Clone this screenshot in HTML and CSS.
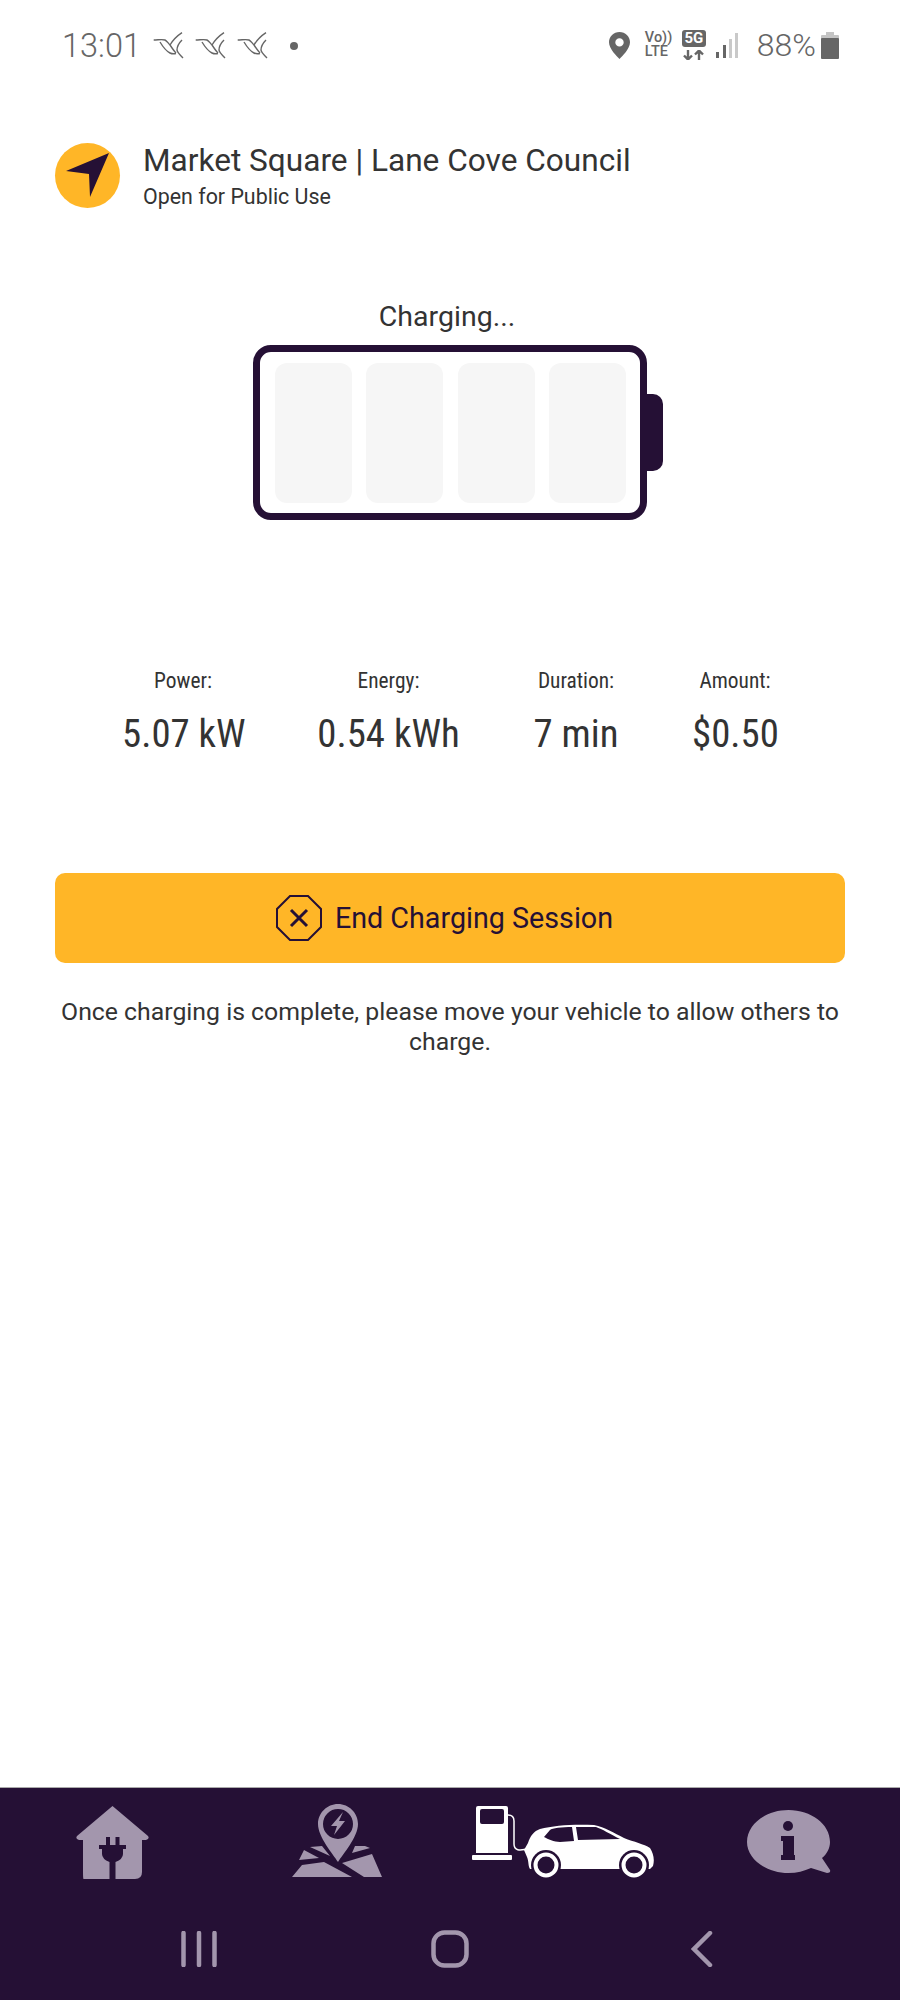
FILE: index.html
```html
<!DOCTYPE html>
<html lang="en">
<head>
  <meta charset="UTF-8">
  <meta name="viewport" content="width=device-width, initial-scale=1.0">
  <title>Charging</title>
  <link rel="stylesheet" href="styles.css">
</head>
<body>
  <div class="app">
    <div class="status-bar">
      <div class="status-left">
        <span class="time">13:01</span>
        <svg class="bird" viewBox="0 0 31 28"><path d="M.7 8C5 8 9 7 12 8 14 9 15 11 17 13 19 16 21 19 23 21M7 10C10 15 13 19 17 21 19 22 21 22 23 21.500M29 .7C24 4 20 8 17 13M30 26C27 23 24 20 24 18 24 15 26 11 29 8"/></svg>
        <svg class="bird" viewBox="0 0 31 28"><path d="M.7 8C5 8 9 7 12 8 14 9 15 11 17 13 19 16 21 19 23 21M7 10C10 15 13 19 17 21 19 22 21 22 23 21.500M29 .7C24 4 20 8 17 13M30 26C27 23 24 20 24 18 24 15 26 11 29 8"/></svg>
        <svg class="bird" viewBox="0 0 31 28"><path d="M.7 8C5 8 9 7 12 8 14 9 15 11 17 13 19 16 21 19 23 21M7 10C10 15 13 19 17 21 19 22 21 22 23 21.500M29 .7C24 4 20 8 17 13M30 26C27 23 24 20 24 18 24 15 26 11 29 8"/></svg>
        <span class="dot"></span>
      </div>
      <div class="status-right">
        <svg class="pin" viewBox="0 0 21 27"><path fill-rule="evenodd" d="M10.5 0C4.7 0 0 4.6 0 10.3 0 17 8 24.500 10.500 27 13 24.500 21 17 21 10.300 21 4.600 16.300 0 10.500 0ZM10.500 6.200A4.200 4.200 0 1 1 10.500 14.600 4.200 4.200 0 1 1 10.500 6.200Z"/></svg>
        <div class="volte"><span>Vo))</span><span>LTE</span></div>
        <div class="net">
          <span class="net-badge">5G</span>
          <svg class="net-arrows" viewBox="0 0 24 10"><path d="M6 0V9M2 5.500L6 9.500 10 5.500M17 10V1M13 4.500L17 .5 21 4.500"/></svg>
        </div>
        <svg class="signal" viewBox="0 0 22 25">
          <rect x="0" y="19" width="3" height="6" fill="#666"/>
          <rect x="7" y="12" width="3" height="13" fill="#666"/>
          <rect x="13" y="6" width="3" height="19" fill="#c9c9c9"/>
          <rect x="19" y="0" width="3" height="25" fill="#c9c9c9"/>
        </svg>
        <span class="percent">88%</span>
        <svg class="phone-battery" viewBox="0 0 18 27">
          <rect x="5" y="0" width="8" height="4" fill="#c4c4c4"/>
          <rect x="0" y="3" width="18" height="4" rx="1" fill="#c4c4c4"/>
          <rect x="0" y="6" width="18" height="21" rx="1" fill="#666"/>
        </svg>
      </div>
    </div>

    <div class="site">
      <div class="site-logo">
        <svg viewBox="0 0 44 44" width="44" height="44"><path d="M0 18L43 0 24 44 23 21Z" fill="#251035"/></svg>
      </div>
      <div>
        <div class="site-name">Market Square | Lane Cove Council</div>
        <div class="site-sub">Open for Public Use</div>
      </div>
    </div>

    <div class="charge-label">Charging...</div>
    <div class="battery">
      <div class="battery-body">
        <div class="cell"></div>
        <div class="cell"></div>
        <div class="cell"></div>
        <div class="cell"></div>
      </div>
      <div class="battery-nub"></div>
    </div>

    <div class="stats">
      <div class="stat stat-power"><div class="stat-label">Power:</div><div class="stat-value">5.07 kW</div></div>
      <div class="stat stat-energy"><div class="stat-label">Energy:</div><div class="stat-value">0.54 kWh</div></div>
      <div class="stat stat-short"><div class="stat-label">Duration:</div><div class="stat-value">7 min</div></div>
      <div class="stat stat-short"><div class="stat-label">Amount:</div><div class="stat-value">$0.50</div></div>
    </div>

    <button class="end-button">
      <svg viewBox="0 0 48 48" width="48" height="48"><path class="octagon" d="M15 2H33L46 15V33L33 46H15L2 33V15Z"/><path class="octagon-x" d="M16 16L32 32M32 16L16 32"/></svg>
      <span>End Charging Session</span>
    </button>
    <p class="note">Once charging is complete, please move your vehicle to allow others to charge.</p>

    <div class="bottom">
      <div class="tabs">
        <svg class="tab-home" viewBox="0 0 73 73"><path fill="#a396ad" d="M36.500 0L72 30Q74 33 70 34H66V66Q66 73 59 73H7.500Q7 73 7 66V34H3Q-1 33 1 30Z"/><path fill="#251035" d="M30 31H34V39H39.500V31H43.500V39H50V43H47V48Q47 53 39.500 56V73H33.500V56Q26 53 26 48V43H23V39H30Z"/></svg>
        <svg class="tab-map" viewBox="0 0 90 74">
          <path fill="#a396ad" fill-rule="evenodd" d="M46 0C35 0 26 9 26 20 26 33 41 50 46 58 51 50 66 33 66 20 66 9 57 0 46 0ZM46 5A15 15 0 1 1 46 35 15 15 0 1 1 46 5Z"/>
          <path fill="#a396ad" d="M51 8L39 22H45L42 31 53 17H47ZM0 73L10 61 32 58 60 73ZM7 56L12 46 27 54ZM18 43L30 42 38 52ZM60 49L78 44 73 42H63ZM50 59L80 50 90 73H72Z"/>
        </svg>
        <svg class="tab-car" viewBox="0 0 182 72">
          <path fill="#fff" fill-rule="evenodd" d="M4 2Q4 0 6 0H34Q36 0 36 2V47H4ZM10 3Q8 3 8 5V16Q8 18 10 18H30Q32 18 32 16V5Q32 3 30 3Z"/>
          <rect x="0" y="49" width="40" height="5" rx="1" fill="#fff"/>
          <path class="hose" d="M36 9C40 9 42 11 42 15V38C42 44 47 46 57 42"/>
          <path fill="#fff" fill-rule="evenodd" d="M56 37C58 30 62 25 68 23 82 19 104 18 122 19 133 21 142 27 152 32 162 36 172 38 178 42 181 47 183 53 181 60L178 63H58C56 60 57 56 55 51L52 44ZM72 31C76 33 82 36 88 36L102 35 100 21C90 21 80 22 78 24ZM104 21L106 34 148 33C138 28 130 23 124 21Z"/>
          <circle cx="74" cy="59" r="15" fill="#251035"/>
          <circle cx="74" cy="59" r="10.500" class="wheel"/>
          <circle cx="162" cy="59" r="15" fill="#251035"/>
          <circle cx="162" cy="59" r="10.500" class="wheel"/>
        </svg>
        <svg class="tab-info" viewBox="0 0 84 64">
          <path fill="#a396ad" d="M41.500 0C64 0 83 14 83 32 83 38 80 44 75 48L83 60Q84 63 80 63L64 58C57 61 50 63 41.500 63 19 63 0 49 0 32 0 14 19 0 41.500 0Z"/>
          <circle cx="41" cy="16" r="5" fill="#251035"/>
          <path fill="#251035" d="M34 26H47V45H48V50H34V45H36V31H34Z"/>
        </svg>
      </div>
      <div class="softkeys">
        <svg class="key-recent" viewBox="0 0 36 36"><path d="M2.500 2V34M18 2V34M33.500 2V34"/></svg>
        <svg class="key-home" viewBox="0 0 38 38"><rect x="2.500" y="2.500" width="33" height="33" rx="11"/></svg>
        <svg class="key-back" viewBox="0 0 22 36"><path d="M19 2L3 18 19 34"/></svg>
      </div>
    </div>
  </div>
</body>
</html>
```

FILE: styles.css
```css
* {
  box-sizing: border-box;
}

body {
  margin: 0;
  font-family: Roboto, "Liberation Sans", sans-serif;
  color: #333;
  background-color: #fff;
}

.app {
  width: 900px;
  height: 2000px;
  display: flex;
  flex-direction: column;
}

/* status bar */
.status-bar {
  height: 92px;
  display: flex;
  justify-content: space-between;
  align-items: center;
  padding: 0 61px 0 62px;
  color: #666;
}

.status-left,
.status-right {
  display: flex;
  align-items: center;
}

.time {
  font-size: 32.500px;
  font-weight: 300;
  width: 91px;
}

.bird {
  width: 31px;
  height: 28px;
  margin-right: 11px;
  fill: none;
  stroke: #666;
  stroke-width: 1.4;
}

.dot {
  width: 8px;
  height: 8px;
  margin-left: 11px;
  border-radius: 50%;
  background-color: #666;
}

.status-right {
  margin-top: -2px;
}

.pin {
  width: 21px;
  height: 27px;
  fill: #666;
  margin-right: 15px;
}

.volte {
  width: 27px;
  margin-right: 10px;
  font-size: 14.500px;
  font-weight: 500;
  line-height: 14px;
  white-space: nowrap;
  display: flex;
  flex-direction: column;
}

.net {
  width: 24px;
  margin-right: 10px;
  display: flex;
  flex-direction: column;
  gap: 3px;
}

.net-badge {
  height: 17px;
  border-radius: 3px;
  background-color: #666;
  color: #fff;
  font-size: 15px;
  font-weight: 700;
  line-height: 17px;
  text-align: center;
}

.net-arrows {
  width: 24px;
  height: 10px;
  fill: none;
  stroke: #666;
  stroke-width: 2.4;
}

.signal {
  width: 22px;
  height: 25px;
  margin-right: 19px;
}

.percent {
  font-size: 32px;
  font-weight: 300;
  margin-right: 5px;
}

.phone-battery {
  width: 18px;
  height: 27px;
}

/* site header */
.site {
  display: flex;
  align-items: center;
  gap: 23px;
  margin: 47px 55px 0;
}

.site-logo {
  width: 65px;
  height: 65px;
  flex-shrink: 0;
  border-radius: 50%;
  background-color: #ffb627;
  display: flex;
  align-items: center;
  justify-content: center;
}

.site-name {
  font-size: 31.600px;
  line-height: 44px;
}

.site-sub {
  font-size: 21.400px;
  line-height: 28px;
}

/* battery */
.charge-label {
  margin-top: 89px;
  padding-right: 6px;
  text-align: center;
  font-size: 28.500px;
  line-height: 34px;
}

.battery {
  display: flex;
  align-items: center;
  margin: 11px 0 0 253px;
}

.battery-body {
  width: 394px;
  height: 175px;
  border: 7px solid #251035;
  border-radius: 18px;
  display: flex;
  gap: 14.500px;
  padding: 11px 14px 10px 15px;
}

.cell {
  flex: 1;
  border-radius: 12px;
  background-color: #f6f6f6;
}

.battery-nub {
  width: 16px;
  height: 77px;
  border-radius: 0 10px 10px 0;
  background-color: #251035;
}

/* stats */
.stats {
  display: flex;
  gap: 73px;
  margin-top: 148px;
  padding-left: 122px;
  text-align: center;
}

.stat-power { width: 122px; }
.stat-energy { width: 143px; }
.stat-short { width: 86px; }

.stat-label,
.stat-value {
  font-stretch: condensed;
  white-space: nowrap;
}

.stat-label {
  font-size: 21.400px;
  line-height: 26px;
}

.stat-value {
  margin-top: 17px;
  font-size: 38.800px;
  line-height: 46px;
}

/* end button */
.end-button {
  margin: 116px 55px 0;
  height: 90px;
  padding: 0 12px 0 0;
  border: none;
  border-radius: 10px;
  background-color: #ffb627;
  color: #251035;
  font-family: inherit;
  font-size: 28.700px;
  display: flex;
  align-items: center;
  justify-content: center;
  gap: 12px;
}

.octagon {
  fill: none;
  stroke: #251035;
  stroke-width: 2;
}

.octagon-x {
  fill: none;
  stroke: #251035;
  stroke-width: 3;
}

.note {
  margin: 34px 55px 0;
  text-align: center;
  font-size: 24.800px;
  line-height: 30px;
}

/* bottom nav */
.bottom {
  margin-top: auto;
  height: 213px;
  background-color: #251035;
  border-top: 1px solid #aaa;
}

.tabs {
  display: flex;
  align-items: flex-start;
  padding: 18px 0 0 76px;
}

.tab-home {
  width: 73px;
  height: 73px;
  margin-right: 143px;
}

.tab-map {
  width: 90px;
  height: 74px;
  margin: -2px 90px 0 0;
}

.tab-car {
  width: 182px;
  height: 72px;
  margin-right: 93px;
}

.tab-info {
  width: 84px;
  height: 64px;
  margin-top: 4px;
}

.hose {
  fill: none;
  stroke: #fff;
  stroke-width: 1.500;
}

.wheel {
  fill: #251035;
  stroke: #fff;
  stroke-width: 4;
}

.softkeys {
  display: flex;
  align-items: center;
  margin-top: 51px;
  padding-left: 181px;
}

.softkeys svg {
  fill: none;
  stroke: #a396ad;
  stroke-width: 4.500;
  stroke-linecap: round;
}

.key-recent {
  width: 36px;
  height: 36px;
  margin-right: 214px;
}

.key-home {
  width: 38px;
  height: 38px;
  margin-right: 222px;
}

.key-back {
  width: 22px;
  height: 36px;
}
```
